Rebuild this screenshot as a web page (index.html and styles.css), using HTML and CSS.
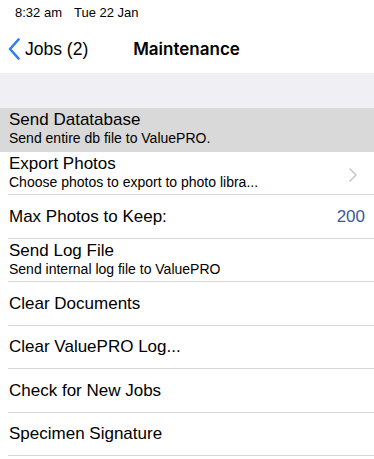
FILE: index.html
```html
<!DOCTYPE html>
<html lang="en">
<head>
    <meta charset="UTF-8">
    <meta name="viewport" content="width=device-width, initial-scale=1.0">
    <title>Maintenance</title>
    <link rel="stylesheet" href="styles.css">
</head>
<body>
    <div class="status-bar">
        <span>8:32 am</span>
        <span>Tue 22 Jan</span>
    </div>

    <div class="nav-bar">
        <a class="back" href="#">
            <svg width="12" height="22" viewBox="0 0 12 22">
                <path d="M10.5 1.5 L2 11 L10.5 20.5" fill="none" stroke="#2f7cf6" stroke-width="2.6" stroke-linecap="round" stroke-linejoin="round"/>
            </svg>
            <span>Jobs (2)</span>
        </a>
        <div class="nav-title">Maintenance</div>
    </div>

    <div class="section-header"></div>

    <ul class="table">
        <li class="cell selected double">
            <div class="cell-text">
                <div class="title">Send Datatabase</div>
                <div class="subtitle">Send entire db file to ValuePRO.</div>
            </div>
        </li>
        <li class="cell double">
            <div class="cell-text">
                <div class="title">Export Photos</div>
                <div class="subtitle">Choose photos to export to photo libra...</div>
            </div>
            <svg class="chevron" width="8" height="14" viewBox="0 0 8 14">
                <path d="M1 1 L7 7 L1 13" fill="none" stroke="#c7c7cc" stroke-width="1.6" stroke-linecap="round" stroke-linejoin="round"/>
            </svg>
        </li>
        <li class="cell">
            <div class="title">Max Photos to Keep:</div>
            <div class="value">200</div>
        </li>
        <li class="cell double">
            <div class="cell-text">
                <div class="title">Send Log File</div>
                <div class="subtitle">Send internal log file to ValuePRO</div>
            </div>
        </li>
        <li class="cell">
            <div class="title">Clear Documents</div>
        </li>
        <li class="cell">
            <div class="title">Clear ValuePRO Log...</div>
        </li>
        <li class="cell">
            <div class="title">Check for New Jobs</div>
        </li>
        <li class="cell">
            <div class="title">Specimen Signature</div>
        </li>
    </ul>
</body>
</html>
```

FILE: styles.css
```css
* {
    box-sizing: border-box;
    font-family: "Liberation Sans", Arial, sans-serif;
}

body {
    margin: 0;
    background-color: #ffffff;
    color: #000000;
    width: 374px;
    overflow: hidden;
}

.status-bar {
    height: 24px;
    display: flex;
    gap: 12px;
    align-items: center;
    padding-left: 15px;
    font-size: 13px;
    font-family: Inter, "Liberation Sans", sans-serif;
    font-weight: 500;
}

.nav-bar {
    height: 49px;
    display: flex;
    align-items: center;
    justify-content: center;
    position: relative;
}

.back {
    position: absolute;
    left: 8px;
    top: 14px;
    display: flex;
    align-items: center;
    gap: 5px;
    color: #000000;
    text-decoration: none;
    font-size: 17.5px;
}

.nav-title {
    font-size: 17px;
    font-family: Inter, "Liberation Sans", sans-serif;
    font-weight: 600;
    margin-left: -1px;
    margin-top: 1px;
}

.section-header {
    height: 35px;
    background-color: #efeff4;
}

.table {
    list-style: none;
    margin: 0;
    padding: 0;
}

.cell {
    height: 43.5px;
    display: flex;
    align-items: center;
    padding: 0 9px;
    position: relative;
}

.cell::after {
    content: "";
    position: absolute;
    left: 8px;
    right: 0;
    bottom: 0;
    height: 1px;
    background-color: #d6d6da;
}

.cell.selected {
    background-color: #d9d9d9;
}

.cell.selected::after {
    display: none;
}

.cell.double {
    align-items: flex-start;
    padding-top: 2px;
}

.cell.double .title {
    line-height: 19px;
}

.cell-text {
    flex: 1;
    display: flex;
    flex-direction: column;
}

.title {
    flex: 1;
    font-size: 17px;
    line-height: 22px;
}

.subtitle {
    font-size: 14px;
    line-height: 18px;
}

.value {
    font-size: 17px;
    color: #3b5998;
}

.chevron {
    align-self: center;
    margin-right: 8px;
    margin-top: 2px;
}
```
